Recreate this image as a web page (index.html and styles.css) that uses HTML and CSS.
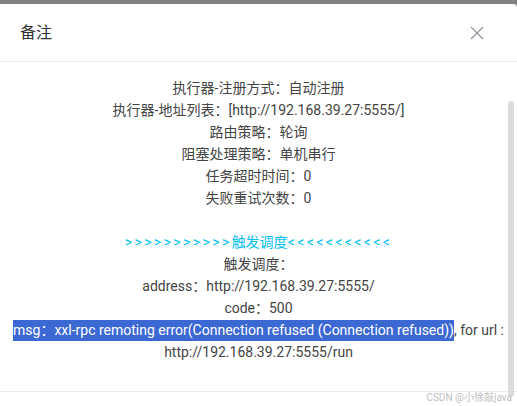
FILE: index.html
```html
<!DOCTYPE html>
<html>
<head>
<meta charset="utf-8">
<link rel="stylesheet" href="styles.css">
</head>
<body>
<div class="topbar"></div>
<div class="modal">
  <div class="header">
    <span class="title">备注</span>
    <svg class="close" width="14" height="14" viewBox="0 0 14 14"><path d="M1 1L13 13M13 1L1 13" stroke="#909399" stroke-width="1.3" fill="none"/></svg>
  </div>
  <div class="body">
    <div class="content">
      执行器-注册方式：自动注册<br>
      执行器-地址列表：[http://192.168.39.27:5555/]<br>
      路由策略：轮询<br>
      阻塞处理策略：单机串行<br>
      任务超时时间：0<br>
      失败重试次数：0<br>
      <br>
      <span class="trigger"><span class="arrows">&gt;&gt;&gt;&gt;&gt;&gt;&gt;&gt;&gt;&gt;&gt;</span>触发调度<span class="arrows">&lt;&lt;&lt;&lt;&lt;&lt;&lt;&lt;&lt;&lt;&lt;</span></span><br>
      触发调度：<br>
      address：http://192.168.39.27:5555/<br>
      code：500<br>
      <span class="sel">msg：xxl-rpc remoting error(Connection refused (Connection refused))</span>, for url :<br>
      http://192.168.39.27:5555/run
    </div>
    <div class="thumb"></div>
  </div>
  <div class="footer">
    <span class="mark">CSDN @小徐敲java</span>
  </div>
</div>
</body>
</html>
```
FILE: styles.css
```css
html, body {
  margin: 0;
  padding: 0;
  background: #808080;
  width: 517px;
  height: 406px;
  overflow: hidden;
}
body {
  font-family: Roboto, "Noto Sans CJK SC", sans-serif;
  color: #333;
}
.topbar {
  height: 4px;
}
.modal {
  background: #fff;
  height: 402px;
  border-top-right-radius: 4px;
  display: flex;
  flex-direction: column;
}
.header {
  height: 57px;
  display: flex;
  align-items: center;
  justify-content: space-between;
  padding: 0 33px 0 20px;
  border-bottom: 1px solid #ebebeb;
}
.title {
  font-size: 16px;
  color: #303133;
  line-height: 1;
}
.close {
  display: block;
}
.body {
  position: relative;
  height: 329px;
  border-bottom: 1px solid #ebebeb;
}
.content {
  padding-top: 15px;
  text-align: center;
  font-size: 14px;
  line-height: 22px;
  color: #444;
  white-space: nowrap;
}
.trigger {
  color: #00c0ef;
}
.arrows {
  letter-spacing: 2.4px;
}
.sel {
  background: #3c68d4;
  color: #fff;
  padding: 2px 0 3px;
}
.thumb {
  position: absolute;
  right: 3px;
  top: 39px;
  width: 6px;
  height: 296px;
  border-radius: 3px;
  background: #dcdcdc;
}
.footer {
  flex: 1;
  position: relative;
}
.mark {
  position: absolute;
  right: 5px;
  top: 0;
  font-size: 10px;
  line-height: 12px;
  color: #c0c0c0;
}
```
